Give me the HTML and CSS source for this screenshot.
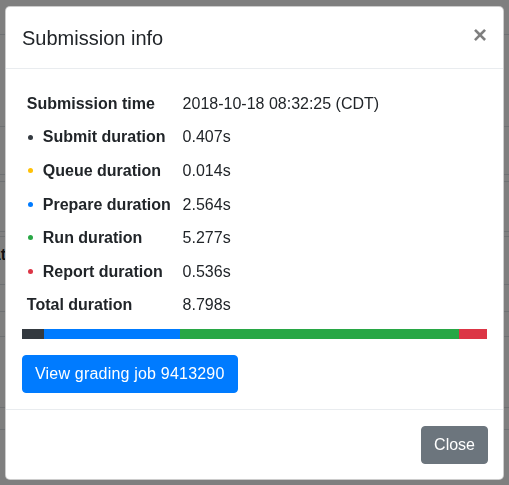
FILE: index.html
```html
<!DOCTYPE html>
<html lang="en">
<head>
  <meta charset="UTF-8">
  <meta name="viewport" content="width=device-width, initial-scale=1.0">
  <title>Submission info</title>
  <link rel="stylesheet" href="styles.css">
</head>
<body>
  <!-- page behind the modal -->
  <div class="page">
    <div class="page-row" style="height: 35px"></div>
    <div class="page-row" style="height: 92px"></div>
    <div class="page-row" style="height: 48px"></div>
    <div class="page-row" style="height: 7px"></div>
    <div class="page-row" style="height: 50px"></div>
    <div class="page-row" style="height: 5px"></div>
    <div class="page-row row-text" style="height: 48px"><span class="cut-text">Late</span></div>
    <div class="page-row" style="height: 27px"></div>
    <div class="page-row" style="height: 25px"></div>
    <div class="page-row" style="height: 71px"></div>
    <div class="page-row" style="height: 22px"></div>
  </div>

  <div class="modal-backdrop"></div>

  <div class="modal">
    <div class="modal-content">
      <div class="modal-header">
        <h5 class="modal-title">Submission info</h5>
        <button class="close" type="button">&times;</button>
      </div>

      <div class="modal-body">
        <table class="info-table">
          <tr>
            <th>Submission time</th>
            <td>2018-10-18 08:32:25 (CDT)</td>
          </tr>
          <tr>
            <th><span class="dot dot-submit"></span>Submit duration</th>
            <td>0.407s</td>
          </tr>
          <tr>
            <th><span class="dot dot-queue"></span>Queue duration</th>
            <td>0.014s</td>
          </tr>
          <tr>
            <th><span class="dot dot-prepare"></span>Prepare duration</th>
            <td>2.564s</td>
          </tr>
          <tr>
            <th><span class="dot dot-run"></span>Run duration</th>
            <td>5.277s</td>
          </tr>
          <tr>
            <th><span class="dot dot-report"></span>Report duration</th>
            <td>0.536s</td>
          </tr>
          <tr>
            <th>Total duration</th>
            <td>8.798s</td>
          </tr>
        </table>

        <div class="progress">
          <div class="bar dot-submit" style="width: 4.626%"></div>
          <div class="bar dot-queue" style="width: 0.159%"></div>
          <div class="bar dot-prepare" style="width: 29.143%"></div>
          <div class="bar dot-run" style="width: 59.980%"></div>
          <div class="bar dot-report" style="width: 6.092%"></div>
        </div>

        <a class="btn btn-primary" href="#">View grading job 9413290</a>
      </div>

      <div class="modal-footer">
        <button class="btn btn-secondary" type="button">Close</button>
      </div>
    </div>
  </div>
</body>
</html>
```

FILE: styles.css
```css
body { margin: 0; font-family: "Liberation Sans", Arial, sans-serif; font-size: 16px; line-height: 1.5; color: #212529; background: #fff; }

.page { width: 100%; }
.page-row { border-bottom: 1px solid #dee2e6; box-sizing: border-box; position: relative; overflow: hidden; }
.row-text { display: flex; align-items: flex-start; }
.cut-text { font-weight: bold; margin-left: -18px; margin-top: 6px; }

.modal-backdrop { position: fixed; top: 0; left: 0; right: 0; bottom: 0; background: rgba(0, 0, 0, 0.5); }

.modal { position: fixed; top: 6px; left: 5px; width: 499px; }
.modal-content { background: #fff; border: 1px solid rgba(0, 0, 0, 0.2); border-radius: 5px; box-sizing: border-box; }

.modal-header { display: flex; align-items: flex-start; padding: 16px 16px 15px; border-bottom: 1px solid #e9ecef; }
.modal-title { margin: 0; font-size: 20px; font-weight: normal; line-height: 30px; }
.close { margin: -16px -16px -16px auto; padding: 16px; background: none; border: 0; font-family: "Liberation Sans", Arial, sans-serif; font-size: 24px; font-weight: bold; line-height: 1; color: #000; opacity: 0.5; cursor: pointer; }

.modal-body { padding: 17px 16px 16px; }

.info-table { border-collapse: collapse; margin-bottom: 8px; }
.info-table th, .info-table td { padding: 5.8px 4.8px 3.8px; line-height: 24px; text-align: left; vertical-align: top; white-space: nowrap; }
.info-table th { width: 146px; font-weight: bold; }
.info-table td { padding-left: 5px; }

.dot { display: inline-block; width: 5px; height: 5px; border-radius: 50%; margin: 0 10px 2px 1px; vertical-align: middle; }
.dot-submit { background: #343a40; }
.dot-queue { background: #ffc107; }
.dot-prepare { background: #007bff; }
.dot-run { background: #28a745; }
.dot-report { background: #dc3545; }

.progress { display: flex; height: 10px; margin-bottom: 16px; background: #e9ecef; overflow: hidden; }
.bar { height: 100%; }

.btn { display: inline-block; box-sizing: border-box; padding: 6px 12px; border: 1px solid transparent; border-radius: 4px; font-family: "Liberation Sans", Arial, sans-serif; font-size: 16px; line-height: 24px; text-decoration: none; cursor: pointer; }
.btn-primary { background: #007bff; border-color: #007bff; color: #fff; letter-spacing: 0.2px; }
.btn-secondary { background: #6c757d; border-color: #6c757d; color: #fff; }

.modal-footer { display: flex; justify-content: flex-end; padding: 16px 15px 15px 16px; border-top: 1px solid #e9ecef; }
```
